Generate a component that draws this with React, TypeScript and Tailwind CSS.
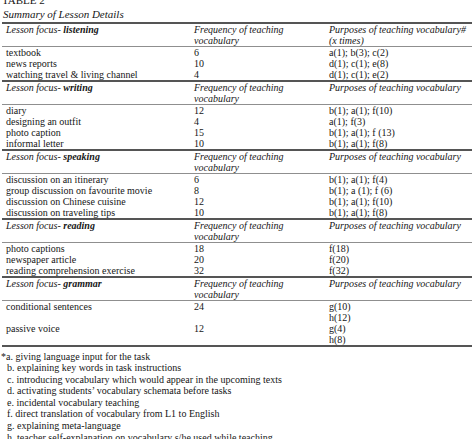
const serif = { fontFamily: '"Liberation Serif", "Times New Roman", serif' };

type Section = {
  focus: string;
  purposeHead: React.ReactNode;
  rows: { task: string; freq: string; purposes: string[] }[];
};

const sections: Section[] = [
  {
    focus: "listening",
    purposeHead: (
      <>
        Purposes of teaching vocabulary#
        <br />
        (x times)
      </>
    ),
    rows: [
      { task: "textbook", freq: "6", purposes: ["a(1); b(3); c(2)"] },
      { task: "news reports", freq: "10", purposes: ["d(1); c(1); e(8)"] },
      { task: "watching travel & living channel", freq: "4", purposes: ["d(1); c(1); e(2)"] },
    ],
  },
  {
    focus: "writing",
    purposeHead: "Purposes of teaching vocabulary",
    rows: [
      { task: "diary", freq: "12", purposes: ["b(1); a(1); f(10)"] },
      { task: "designing an outfit", freq: "4", purposes: ["a(1); f(3)"] },
      { task: "photo caption", freq: "15", purposes: ["b(1); a(1); f (13)"] },
      { task: "informal letter", freq: "10", purposes: ["b(1); a(1); f(8)"] },
    ],
  },
  {
    focus: "speaking",
    purposeHead: "Purposes of teaching vocabulary",
    rows: [
      { task: "discussion on an itinerary", freq: "6", purposes: ["b(1); a(1); f(4)"] },
      { task: "group discussion on favourite movie", freq: "8", purposes: ["b(1); a (1); f (6)"] },
      { task: "discussion on Chinese cuisine", freq: "12", purposes: ["b(1); a(1); f(10)"] },
      { task: "discussion on traveling tips", freq: "10", purposes: ["b(1); a(1); f(8)"] },
    ],
  },
  {
    focus: "reading",
    purposeHead: "Purposes of teaching vocabulary",
    rows: [
      { task: "photo captions", freq: "18", purposes: ["f(18)"] },
      { task: "newspaper article", freq: "20", purposes: ["f(20)"] },
      { task: "reading comprehension exercise", freq: "32", purposes: ["f(32)"] },
    ],
  },
  {
    focus: "grammar",
    purposeHead: "Purposes of teaching vocabulary",
    rows: [
      { task: "conditional sentences", freq: "24", purposes: ["g(10)", "h(12)"] },
      { task: "passive voice", freq: "12", purposes: ["g(4)", "h(8)"] },
    ],
  },
];

const notes = [
  "b. explaining key words in task instructions",
  "c. introducing vocabulary which would appear in the upcoming texts",
  "d. activating students\u2019 vocabulary schemata before tasks",
  "e. incidental vocabulary teaching",
  "f. direct translation of vocabulary from L1 to English",
  "g. explaining meta-language",
  "h. teacher self-explanation on vocabulary s/he used while teaching",
];

function Rule({ light }: { light?: boolean }) {
  return <div className={light ? "h-[1.5px] bg-[#8f8f8f]" : "h-[1.5px] bg-[#555]"} />;
}

export default function App() {
  return (
    <div className="w-[474px] h-[439px] overflow-hidden bg-white text-[#161616]" style={serif}>
      <div className="-mt-[6px] pl-[2px] text-[11px] leading-[12px]">TABLE 2</div>
      <div className="pl-[3px] text-[11px] leading-[16px] italic">Summary of Lesson Details</div>
      <div className="px-[2px] text-[10px] leading-[11px]">
        {sections.map((s) => (
          <div key={s.focus}>
            <Rule />
            <div className="grid grid-cols-[192px_135px_1fr] italic">
              <div className="pl-[4px]">
                Lesson focus- <b>{s.focus}</b>
              </div>
              <div>
                Frequency of teaching
                <br />
                vocabulary
              </div>
              <div>{s.purposeHead}</div>
            </div>
            <Rule light />
            {s.rows.map((r) => (
              <div key={r.task} className="grid grid-cols-[192px_135px_1fr]">
                <div className="pl-[4px]">{r.task}</div>
                <div>{r.freq}</div>
                <div>
                  {r.purposes.map((p) => (
                    <div key={p}>{p}</div>
                  ))}
                </div>
              </div>
            ))}
          </div>
        ))}
        <Rule />
      </div>
      <div className="mt-[4px] text-[10px] leading-[11.6px]">
        <div className="pl-px">*a. giving language input for the task</div>
        {notes.map((n) => (
          <div key={n} className="pl-[7px]">
            {n}
          </div>
        ))}
      </div>
    </div>
  );
}
